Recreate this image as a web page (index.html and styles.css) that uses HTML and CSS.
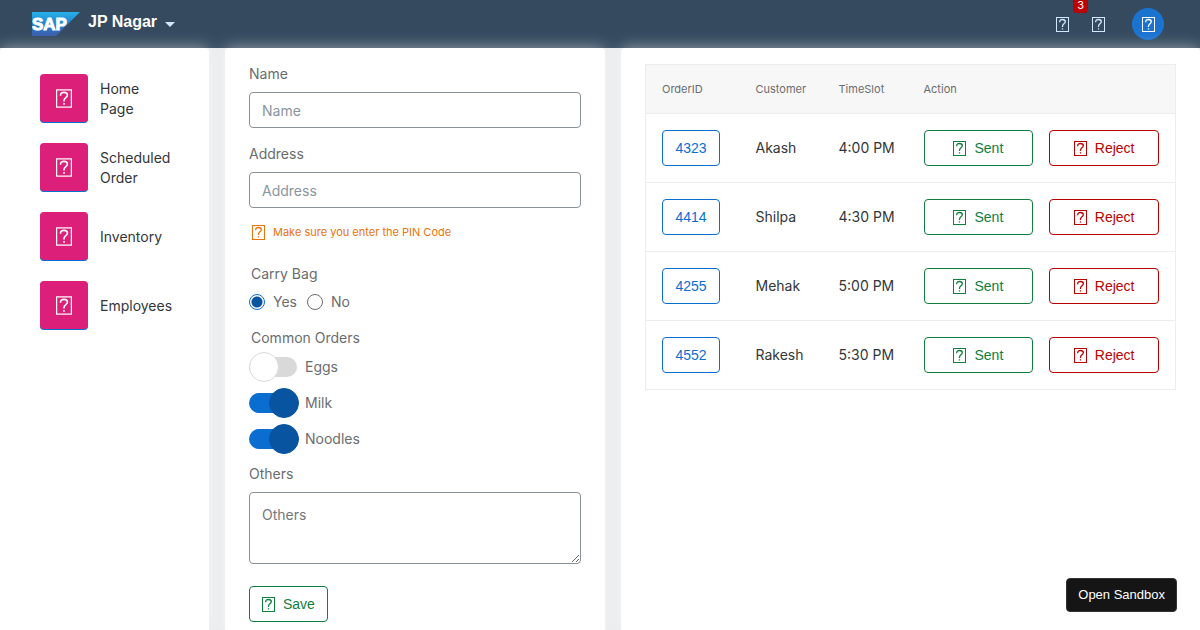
FILE: index.html
```html
<!DOCTYPE html>
<html lang="en">
<head>
	<meta charset="utf-8">
	<title>JP Nagar</title>
	<link rel="stylesheet" href="styles.css">
</head>
<body>
	<!--icons-->
	<svg class="defs" aria-hidden="true">
		<symbol id="icon" viewBox="0 0 13 15">
			<rect x="0.5" y="0.5" width="12" height="14" fill="none" stroke="currentColor"/>
			<path d="M3.7 5.2V4.7C3.7 3.2 4.8 2.5 6.5 2.5S9.3 3.3 9.3 4.7C9.3 6.8 6.5 6.9 6.5 9.2V10M6.5 11.2V12.6" fill="none" stroke="currentColor" stroke-width="1.3"/>
		</symbol>
	</svg>

	<!--shell bar-->
	<header class="shellbar">
		<svg class="logo" viewBox="0 0 48 24" role="img" aria-label="SAP">
			<defs>
				<linearGradient id="sap" x1="0" y1="0" x2="0" y2="1">
					<stop offset="0" stop-color="#25b1e8"/>
					<stop offset="0.5" stop-color="#2583cc"/>
					<stop offset="1" stop-color="#3a5bac"/>
				</linearGradient>
			</defs>
			<path d="M0 0H48L24 24H0Z" fill="url(#sap)"/>
			<text class="logo-text" x="0" y="18">SAP</text>
		</svg>
		<button class="title" type="button">JP Nagar <span class="arrow"></span></button>
		<div class="actions">
			<button class="action" type="button" aria-label="Notifications"><svg class="icon"><use href="#icon"/></svg><span class="badge">3</span></button>
			<button class="action" type="button" aria-label="Settings"><svg class="icon"><use href="#icon"/></svg></button>
			<button class="avatar" type="button" aria-label="Profile"><svg class="icon"><use href="#icon"/></svg></button>
		</div>
	</header>

	<main class="columns">
		<!--menu-->
		<nav class="panel menu">
			<a class="menu-item" href="#home"><span class="tile"><svg class="icon big"><use href="#icon"/></svg></span><span>Home Page</span></a>
			<a class="menu-item" href="#scheduled"><span class="tile"><svg class="icon big"><use href="#icon"/></svg></span><span>Scheduled Order</span></a>
			<a class="menu-item" href="#inventory"><span class="tile"><svg class="icon big"><use href="#icon"/></svg></span><span>Inventory</span></a>
			<a class="menu-item" href="#employees"><span class="tile"><svg class="icon big"><use href="#icon"/></svg></span><span>Employees</span></a>
		</nav>

		<!--order form-->
		<form class="panel form">
			<div class="field">
				<label for="name">Name</label>
				<input class="text" id="name" type="text" placeholder="Name">
			</div>
			<div class="field">
				<label for="address">Address</label>
				<input class="text" id="address" type="text" placeholder="Address">
			</div>
			<p class="hint"><svg class="icon"><use href="#icon"/></svg>Make sure you enter the PIN Code</p>
			<fieldset class="group">
				<legend>Carry Bag</legend>
				<div class="radios">
					<label class="radio"><input type="radio" name="bag" checked>Yes</label>
					<label class="radio"><input type="radio" name="bag">No</label>
				</div>
			</fieldset>
			<fieldset class="group common">
				<legend>Common Orders</legend>
				<div class="switches">
					<label class="switch"><input type="checkbox">Eggs</label>
					<label class="switch"><input type="checkbox" checked>Milk</label>
					<label class="switch"><input type="checkbox" checked>Noodles</label>
				</div>
			</fieldset>
			<div class="field">
				<label for="others">Others</label>
				<textarea class="text area" id="others" placeholder="Others"></textarea>
			</div>
			<button class="btn green save" type="button"><svg class="icon"><use href="#icon"/></svg>Save</button>
		</form>

		<!--orders-->
		<section class="panel">
			<table class="orders">
				<thead>
					<tr><th class="col-id">OrderID</th><th class="col-name">Customer</th><th class="col-time">TimeSlot</th><th>Action</th></tr>
				</thead>
				<tbody>
					<tr>
						<td><button class="btn blue" type="button">4323</button></td><td>Akash</td><td>4:00 PM</td>
						<td><div class="pair"><button class="btn green" type="button"><svg class="icon"><use href="#icon"/></svg>Sent</button><button class="btn red" type="button"><svg class="icon"><use href="#icon"/></svg>Reject</button></div></td>
					</tr>
					<tr>
						<td><button class="btn blue" type="button">4414</button></td><td>Shilpa</td><td>4:30 PM</td>
						<td><div class="pair"><button class="btn green" type="button"><svg class="icon"><use href="#icon"/></svg>Sent</button><button class="btn red" type="button"><svg class="icon"><use href="#icon"/></svg>Reject</button></div></td>
					</tr>
					<tr>
						<td><button class="btn blue" type="button">4255</button></td><td>Mehak</td><td>5:00 PM</td>
						<td><div class="pair"><button class="btn green" type="button"><svg class="icon"><use href="#icon"/></svg>Sent</button><button class="btn red" type="button"><svg class="icon"><use href="#icon"/></svg>Reject</button></div></td>
					</tr>
					<tr>
						<td><button class="btn blue" type="button">4552</button></td><td>Rakesh</td><td>5:30 PM</td>
						<td><div class="pair"><button class="btn green" type="button"><svg class="icon"><use href="#icon"/></svg>Sent</button><button class="btn red" type="button"><svg class="icon"><use href="#icon"/></svg>Reject</button></div></td>
					</tr>
				</tbody>
			</table>
		</section>
	</main>

	<button class="sandbox" type="button">Open Sandbox</button>
</body>
</html>
```
FILE: styles.css
```css
*, *::before, *::after{
    margin: 0;
    padding: 0;
    box-sizing: border-box;
}

body{
    min-height: 100vh;
    display: flex;
    flex-direction: column;
    background-color: #ebecee;
    color: #32363a;
    font: 14px/20px Inter, "Liberation Sans", sans-serif;
}

button{
    font: 14px/20px "Liberation Sans", Arial, sans-serif;
    border: 0;
    background: none;
    cursor: pointer;
}

.defs{
    position: absolute;
    width: 0;
    height: 0;
}

.icon{
    width: 13px;
    height: 15px;
    flex: none;
}

.icon.big{
    width: 16px;
    height: 19px;
}

/*shell bar*/
.shellbar{
    height: 48px;
    display: flex;
    align-items: center;
    padding: 0 36px 0 32px;
    background-color: #354a5f;
    color: #d1e8ff;
}

.logo{
    width: 48px;
    height: 24px;
}

.logo-text{
    font: bold 17px "Liberation Sans", Arial, sans-serif;
    fill: #fff;
    stroke: #fff;
    stroke-width: 1px;
}

.title{
    display: flex;
    align-items: center;
    gap: 8px;
    margin-left: 8px;
    padding-bottom: 4px;
    font-size: 16px;
    font-weight: bold;
    color: #fff;
}

.arrow{
    margin-top: 4px;
    border: 5px solid transparent;
    border-top-color: #d1e8ff;
    border-bottom: 0;
}

.actions{
    display: flex;
    align-items: center;
    margin-left: auto;
}

.action{
    position: relative;
    width: 36px;
    height: 36px;
    display: flex;
    align-items: center;
    justify-content: center;
    color: #d1e8ff;
}

.badge{
    position: absolute;
    top: -8px;
    right: -8px;
    padding: 0 4px;
    border-radius: 0 0 4px 4px;
    background-color: #b00;
    color: #fff;
    font: 11px/15px Inter, sans-serif;
}

.avatar{
    width: 32px;
    height: 32px;
    display: flex;
    align-items: center;
    justify-content: center;
    margin-left: 16px;
    border-radius: 50%;
    background-color: #1b73d0;
    color: #fff;
}

/*three columns*/
.columns{
    flex: 1;
    display: grid;
    grid-template-columns: 209fr 380fr 579fr;
    gap: 16px;
}

.panel{
    min-width: 0;
    padding: 16px 24px 0;
    border-radius: 4px 4px 0 0;
    background-color: #fff;
    box-shadow: 0 0 16px rgba(255, 255, 255, 0.5);
}

/*menu*/
.menu{
    display: flex;
    flex-direction: column;
    gap: 20px;
    padding: 26px 38px 0 40px;
}

.menu-item{
    display: flex;
    align-items: center;
    gap: 12px;
    color: #32363a;
    text-decoration: none;
}

.tile{
    flex: none;
    width: 48px;
    height: 48px;
    display: flex;
    align-items: center;
    justify-content: center;
    margin-bottom: 1px;
    border-radius: 4px;
    background-color: #dc1f78;
    box-shadow: 0 1px 0 #0a6ed1;
    color: #fff;
}

/*form*/
.form{
    color: #6a6d70;
}

.field{
    margin-bottom: 16px;
}

.field label{
    display: block;
    margin-bottom: 8px;
}

.text{
    display: block;
    width: 100%;
    height: 36px;
    padding: 0 12px;
    border: 1px solid #89919a;
    border-radius: 4px;
    background-color: #fff;
    font: 14px/20px Inter, "Liberation Sans", sans-serif;
}

.text::placeholder{
    color: #8a959e;
}

.area{
    height: 72px;
    padding: 12px;
}

.area::placeholder{
    color: #74777a;
}

.hint{
    display: flex;
    align-items: center;
    gap: 8px;
    padding-left: 3px;
    margin-bottom: 24px;
    color: #e9730c;
    font-size: 11px;
    line-height: 16px;
}

.group{
    border: 0;
    margin-bottom: 16px;
}

.group legend{
    padding: 0 2px;
    margin-bottom: 8px;
}

.common{
    margin-bottom: 10px;
}

.common legend{
    margin-bottom: 4px;
}

.radios{
    display: flex;
    gap: 10px;
}

.radio{
    display: flex;
    align-items: center;
    gap: 8px;
}

.radio input{
    appearance: none;
    width: 16px;
    height: 16px;
    border: 1px solid #6a6d70;
    border-radius: 50%;
}

.radio input:checked{
    border-color: #0a6ed1;
    background: radial-gradient(#0854a0 5px, #fff 6px);
}

.switches{
    display: flex;
    flex-direction: column;
    gap: 6px;
}

.switch{
    display: flex;
    align-items: center;
    gap: 6px;
}

.switch input{
    appearance: none;
    position: relative;
    width: 50px;
    height: 30px;
    display: flex;
    align-items: center;
}

.switch input::before{
    content: "";
    width: 48px;
    height: 20px;
    border-radius: 10px;
    background-color: #d9d9d9;
}

.switch input::after{
    content: "";
    position: absolute;
    left: 0;
    width: 30px;
    height: 30px;
    border: 1px solid #d9d9d9;
    border-radius: 50%;
    background-color: #fff;
}

.switch input:checked::before{
    background-color: #0a6ed1;
}

.switch input:checked::after{
    left: auto;
    right: 0;
    border-color: #0854a0;
    background-color: #0854a0;
}

/*buttons*/
.btn{
    min-width: 58px;
    height: 36px;
    display: flex;
    align-items: center;
    justify-content: center;
    gap: 8px;
    padding: 0 12px;
    border: 1px solid;
    border-radius: 4px;
    background-color: #fff;
}

.blue{
    color: #0a6ed1;
}

.green{
    color: #107e3e;
}

.red{
    color: #b00;
}

.save{
    margin-top: 22px;
}

/*orders*/
.orders{
    width: 100%;
    table-layout: fixed;
    border: 1px solid #ededed;
    border-collapse: collapse;
}

.orders th{
    height: 49px;
    padding: 0 16px;
    background-color: #f7f7f7;
    color: #6a6d70;
    font-size: 11px;
    font-weight: normal;
    text-align: left;
}

.orders td{
    height: 69px;
    padding: 0 0 0 16px;
    border-top: 1px solid #ededed;
}

.orders td:last-child{
    padding-right: 16px;
}

.col-id{
    width: 94px;
}

.col-name{
    width: 83px;
}

.col-time{
    width: 85px;
}

.pair{
    display: flex;
    gap: 16px;
}

.pair .btn{
    flex: 1;
}

.sandbox{
    position: fixed;
    right: 23px;
    bottom: 18px;
    height: 34px;
    padding: 0 11px;
    border: 1px solid #343434;
    border-radius: 4px;
    background-color: #151515;
    color: #fff;
    font-size: 13px;
}
```
